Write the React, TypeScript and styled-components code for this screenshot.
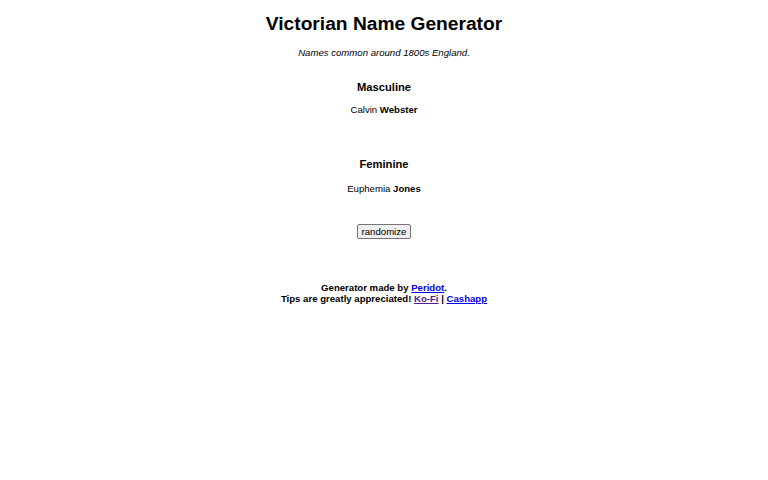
import React, { useState } from 'react';
import styled, { createGlobalStyle } from 'styled-components';

const GlobalStyle = createGlobalStyle`
  html, body {
    margin: 0;
    padding: 0;
    background: #fff;
  }
  body {
    font-family: "Liberation Sans", Arial, sans-serif;
    color: #000;
  }
`;

// Whole page is centred text in a single column
const Page = styled.div`
  display: flex;
  flex-direction: column;
  align-items: center;
  text-align: center;
  padding-top: 13px;
`;

const Title = styled.h1`
  margin: 0;
  font-size: 19.2px;
  line-height: 22px;
  font-weight: bold;
`;

const Subtitle = styled.div`
  margin-top: 11.5px;
  font-size: 9.6px;
  line-height: 11px;
  font-style: italic;
`;

const Heading = styled.h3<{ $gap: number }>`
  margin: ${(p) => p.$gap}px 0 0;
  font-size: 11.2px;
  line-height: 13px;
  font-weight: bold;
`;

const Name = styled.p<{ $gap: number }>`
  margin: ${(p) => p.$gap}px 0 0;
  font-size: 9.6px;
  line-height: 11px;

  b {
    font-weight: bold;
  }
`;

const Button = styled.button`
  margin-top: 30px;
  height: 15px;
  padding: 0 4px;
  font-family: "Liberation Sans", Arial, sans-serif;
  font-size: 9.6px;
  line-height: 11px;
  color: #000;
  background: #efefef;
  border: 1px solid #767676;
  border-radius: 2px;
  cursor: pointer;
`;

const Footer = styled.div`
  margin-top: 43.5px;
  font-size: 9.6px;
  line-height: 11px;
  font-weight: bold;
`;

const Link = styled.a<{ $visited?: boolean }>`
  color: ${(p) => (p.$visited ? '#551a8b' : '#0000ee')};
  text-decoration: underline;
`;

const masculine = [
  ['Calvin', 'Webster'],
  ['Arthur', 'Pembroke'],
  ['Edmund', 'Hawthorne'],
  ['Silas', 'Whitcombe'],
];

const feminine = [
  ['Euphemia', 'Jones'],
  ['Beatrice', 'Ashworth'],
  ['Winifred', 'Carlisle'],
  ['Clementine', 'Gray'],
];

function App() {
  const [m, setM] = useState(0);
  const [f, setF] = useState(0);

  const randomize = () => {
    setM(Math.floor(Math.random() * masculine.length));
    setF(Math.floor(Math.random() * feminine.length));
  };

  return (
    <>
      <GlobalStyle />
      <Page>
        <Title>Victorian Name Generator</Title>
        <Subtitle>Names common around 1800s England.</Subtitle>

        <Heading $gap={23}>Masculine</Heading>
        <Name $gap={10}>
          {masculine[m][0]} <b>{masculine[m][1]}</b>
        </Name>

        <Heading $gap={43}>Feminine</Heading>
        <Name $gap={12}>
          {feminine[f][0]} <b>{feminine[f][1]}</b>
        </Name>

        <Button onClick={randomize}>randomize</Button>

        <Footer>
          Generator made by <Link href="#">Peridot</Link>.
          <br />
          Tips are greatly appreciated! <Link href="#" $visited>Ko-Fi</Link> | <Link href="#">Cashapp</Link>
        </Footer>
      </Page>
    </>
  );
}

export default App;
